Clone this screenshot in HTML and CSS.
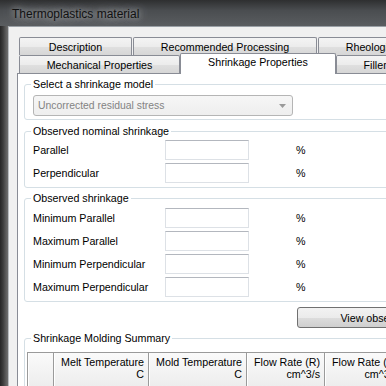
FILE: index.html
```html
<!DOCTYPE html>
<html lang="en">
<head>
  <meta charset="UTF-8">
  <title>Thermoplastics material</title>
  <link rel="stylesheet" href="styles.css">
</head>
<body>

<div class="window">
  <div class="titlebar"><span class="title">Thermoplastics material</span></div>
  <div class="frame">
    <div class="client">
      <div class="tabs">
        <div class="tab-row">
          <div class="tab w-desc">Description</div>
          <div class="tab w-rec">Recommended Processing</div>
          <div class="tab w-rheo">Rheological Properties</div>
        </div>
        <div class="tab-row">
          <div class="tab w-mech">Mechanical Properties</div>
          <div class="tab selected w-shr">Shrinkage Properties</div>
          <div class="tab w-fill">Filler Properties</div>
        </div>
      </div>

      <div class="panel">
        <div class="group g-model">
          <div class="legend">Select a shrinkage model</div>
          <div class="combo">
            <span>Uncorrected residual stress</span>
            <svg class="arrow" width="7" height="4" viewBox="0 0 7 4"><path d="M0 0h7L3.5 4z" fill="#9a9a9a"/></svg>
          </div>
        </div>

        <div class="group g-nominal">
          <div class="legend">Observed nominal shrinkage</div>
          <div class="rows">
            <div class="row"><span class="label">Parallel</span><div class="field"></div><span class="unit">%</span></div>
            <div class="row"><span class="label">Perpendicular</span><div class="field"></div><span class="unit">%</span></div>
          </div>
        </div>

        <div class="group g-observed">
          <div class="legend">Observed shrinkage</div>
          <div class="rows">
            <div class="row"><span class="label">Minimum Parallel</span><div class="field"></div><span class="unit">%</span></div>
            <div class="row"><span class="label">Maximum Parallel</span><div class="field"></div><span class="unit">%</span></div>
            <div class="row"><span class="label">Minimum Perpendicular</span><div class="field"></div><span class="unit">%</span></div>
            <div class="row"><span class="label">Maximum Perpendicular</span><div class="field"></div><span class="unit">%</span></div>
          </div>
        </div>

        <div class="button-row">
          <button class="btn">View observed shrinkage</button>
        </div>

        <div class="group g-summary">
          <div class="legend">Shrinkage Molding Summary</div>
          <div class="grid">
            <div class="hcell c0"></div>
            <div class="hcell c1">Melt Temperature<br>C</div>
            <div class="hcell c2">Mold Temperature<br>C</div>
            <div class="hcell c3">Flow Rate (R)<br>cm^3/s</div>
            <div class="hcell c4">Flow Rate (R)<br>cm^3/s</div>
          </div>
        </div>
      </div>
    </div>
  </div>
</div>

</body>
</html>
```

FILE: styles.css
```css
* { box-sizing: border-box; }
body {
  margin: 0;
  font-family: 'Liberation Sans', Arial, sans-serif;
  font-size: 10.7px;
  color: #000;
  background: #3a3a3a;
}
.window {
  width: 386px;
  height: 386px;
  overflow: hidden;
  background: #3a3a3a;
}
.titlebar {
  height: 26px;
  padding: 4px 0 0 12px;
  background: linear-gradient(#2e2f30, #4a4d50 40%, #5a5d60);
}
.title {
  font-family: 'Liberation Sans', Arial, sans-serif;
  font-size: 12px;
  line-height: 20px;
  color: #111;
  text-shadow: 0 0 6px rgba(205,208,212,0.9), 0 0 14px rgba(185,188,192,0.8);
}
.frame {
  display: flex;
  height: 360px;
  padding-left: 8px;
  background: linear-gradient(to right, #262626 0, #3c3c3c 3px, #5c5c5c 6px, #6e6e6e 8px);
}
.client {
  width: 600px;
  border-top: 1px solid #9aa0a6;
  border-left: 1px solid #b8bcc0;
  background: #f0f0f0;
  padding: 10px 0 0 8px;
}

/* tabs */
.tabs {
  padding-left: 2px;
}
.tab-row {
  display: flex;
  height: 18px;
}
.tab {
  flex: none;
  height: 18px;
  border: 1px solid #898c95;
  border-bottom: none;
  border-radius: 2px 2px 0 0;
  background: linear-gradient(#f4f4f4, #ececec 50%, #e0e0e0 51%, #d6d6d6);
  text-align: center;
  line-height: 18px;
  white-space: nowrap;
}
.w-desc { width: 113px; margin-right: 1px; }
.w-rec { width: 184px; margin-right: 1px; }
.w-rheo { width: 163px; }
.w-mech { width: 161px; }
.w-shr { width: 156px; }
.w-fill { width: 130px; }
.tab.selected {
  position: relative;
  z-index: 1;
  height: 21px;
  margin-top: -2px;
  background: #fff;
  line-height: 17px;
}

/* panel */
.panel {
  width: 560px;
  height: 330px;
  border-top: 1px solid #898c95;
  border-left: 1px solid #898c95;
  background: #fff;
  padding: 10px 0 0 6px;
}
.group {
  border: 1px solid #d5dfe5;
  border-radius: 3px;
  padding: 0 8px;
}
.legend {
  width: max-content;
  margin: -7px 0 0 -2px;
  padding: 0 2px;
  line-height: 13px;
  background: #fff;
}
.g-model { padding-bottom: 3px; }
.g-nominal { margin-top: 11px; padding-bottom: 4px; }
.g-observed { margin-top: 10px; padding-bottom: 4px; }
.g-summary { margin-top: 10px; padding: 0 2px; }
.g-summary .legend { margin-left: 4px; }

.combo {
  display: flex;
  align-items: center;
  justify-content: space-between;
  width: 260px;
  height: 21px;
  margin-top: 4px;
  padding: 0 6px 0 4px;
  border: 1px solid #b5b5b5;
  border-radius: 3px;
  background: linear-gradient(#f6f6f6, #eeeeee);
  color: #838383;
  font-size: 10.4px;
}
.g-nominal .rows { margin-top: 2px; }
.g-observed .rows { margin-top: 3px; }
.rows {
  display: flex;
  flex-direction: column;
  gap: 3px;
}
.row {
  display: flex;
  align-items: center;
  height: 20px;
}
.label {
  width: 132px;
}
.field {
  width: 84px;
  height: 20px;
  border: 1px solid #dde1e6;
  border-top-color: #b3b7be;
  background: #fff;
}
.unit {
  margin-left: 47px;
}

.button-row {
  margin-top: 5px;
  padding-left: 273px;
}
.btn {
  display: block;
  width: 206px;
  height: 21px;
  padding: 0;
  border: 1px solid #707070;
  border-radius: 3px;
  background: linear-gradient(#f2f2f2, #ebebeb 50%, #dddddd 51%, #cfcfcf);
  font-family: 'Liberation Sans', Arial, sans-serif;
  font-size: 10.7px;
  color: #000;
}

/* summary grid */
.grid {
  display: grid;
  grid-template-columns: 26px 95px 98px 78px 78px;
  margin-top: 7px;
  border-top: 1px solid #9a9a9a;
  border-left: 1px solid #9a9a9a;
}
.hcell {
  height: 36px;
  padding: 3px 4px 0 0;
  border-right: 1px solid #9a9a9a;
  box-shadow: inset 1px 0 0 #fff;
  background: linear-gradient(#fafafa, #ececec);
  text-align: right;
  line-height: 12px;
  white-space: nowrap;
}
```
